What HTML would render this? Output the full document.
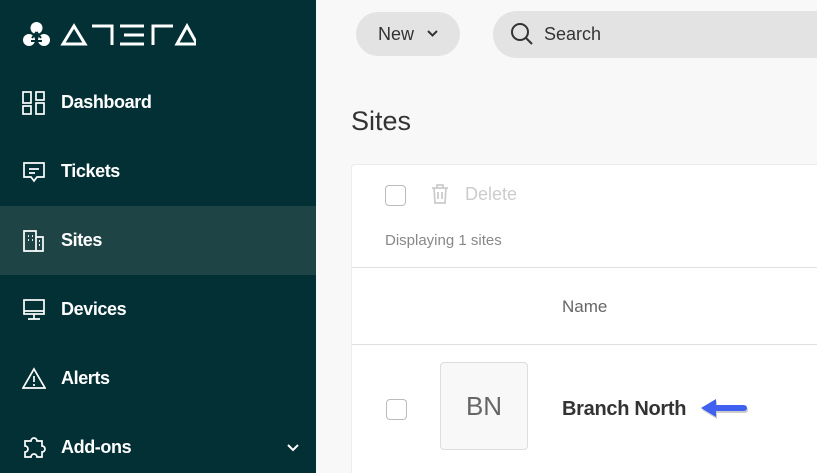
<!DOCTYPE html>
<html style="width:817px;height:473px;overflow:hidden"><head><style>
*{margin:0;padding:0;box-sizing:border-box}
body{width:817px;height:473px;overflow:hidden;font-family:"Liberation Sans",Arial,sans-serif;background:#f8f8f8;position:relative}
.sb{position:absolute;left:0;top:0;width:316px;height:473px;background:#033035;color:#fff}
.item{position:absolute;left:0;width:316px;height:69px;display:flex;align-items:center}
.item svg{position:absolute;left:22px}
.item span{position:absolute;left:61px;font-size:18px;font-weight:bold;letter-spacing:-0.4px}
.act{background:#1f4446}
.main{position:absolute;left:316px;top:0;width:501px;height:473px;overflow:hidden}
.btn{position:absolute;left:40px;top:12px;width:104px;height:44px;border-radius:22px;background:#e3e3e3;font-size:18px;color:#333}
.search{position:absolute;left:177px;top:11px;width:400px;height:47px;border-radius:24px 0 0 24px;background:#e3e3e3}
.card{position:absolute;left:35px;top:164px;width:500px;height:320px;background:#fff;border:1px solid #ececec;border-radius:4px}
.cb{position:absolute;width:21px;height:21px;border:1.5px solid #bbb;border-radius:4px;background:#fff}
</style></head><body>
<div class="sb">
 <svg style="position:absolute;left:22px;top:21px" width="29" height="26" viewBox="0 0 29 26"><circle cx="14.5" cy="7" r="6" fill="#fff"/><circle cx="7" cy="19" r="6" fill="#fff"/><circle cx="22" cy="19" r="6" fill="#fff"/><path d="M14.5 11 L10 17 M14.5 11 L19 17 M9 20 H20" stroke="#033035" stroke-width="2"/></svg>
 <svg style="position:absolute;left:60px;top:23px" width="136" height="24" viewBox="0 0 136 24" fill="none" stroke="#fff" stroke-width="3"><path d="M3 21 L14 3 L25 21 Z" /><path d="M32 3 H52 V22"/><path d="M60 3 H84 M64 12 H84 M60 21 H84"/><path d="M93 22 V3 H113"/><path d="M117 21 L127 3 L137 21 Z"/></svg>
 <div class="item" style="top:68px"><svg width="24" height="24" viewBox="0 0 24 24" fill="none" stroke="#fff" stroke-width="1.7"><rect x="1" y="1" width="8" height="11"/><rect x="1" y="15" width="8" height="8"/><rect x="14" y="1" width="8" height="8"/><rect x="14" y="12" width="8" height="11"/></svg><span>Dashboard</span></div>
 <div class="item" style="top:137px"><svg width="24" height="24" viewBox="0 0 24 24" fill="none" stroke="#fff" stroke-width="1.7"><path d="M2 3 H22 V17 H15 L12 21 L9 17 H2 Z M7 9 H17 M7 13 H13"/></svg><span>Tickets</span></div>
 <div class="item act" style="top:206px"><svg width="24" height="24" viewBox="0 0 24 24" fill="none" stroke="#fff" stroke-width="1.7"><path d="M2 22 V2 H14 V22 Z M14 8 H21 V22 H2 M6 7h1M10 7h1M6 11h1M10 11h1M17 12h1M17 16h1"/></svg><span>Sites</span></div>
 <div class="item" style="top:275px"><svg width="24" height="24" viewBox="0 0 24 24" fill="none" stroke="#fff" stroke-width="1.7"><rect x="2" y="2" width="20" height="14"/><path d="M2 13 H22 M12 16 V21 M6 21 H18"/></svg><span>Devices</span></div>
 <div class="item" style="top:344px"><svg width="24" height="24" viewBox="0 0 24 24" fill="none" stroke="#fff" stroke-width="1.7"><path d="M12 2 L23 21 H1 Z M12 9 V15 M12 17 V19"/></svg><span>Alerts</span></div>
 <div class="item" style="top:413px"><svg width="24" height="24" viewBox="0 0 24 24" fill="none" stroke="#fff" stroke-width="1.7"><path d="M9 5 a3 3 0 0 1 6 0 H20 V10 a3 3 0 0 1 0 6 V21 H15 a3 3 0 0 0 -6 0 H3 V16 a3 3 0 0 0 0 -6 V5 Z"/></svg><span>Add-ons</span><svg style="left:286px" width="14" height="10" viewBox="0 0 14 10" fill="none" stroke="#fff" stroke-width="2"><path d="M2 2 L7 7 L12 2"/></svg></div>
</div>
<div class="main">
 <div class="btn"><span style="position:absolute;left:22px;top:12px">New</span><svg style="position:absolute;left:71px;top:18px" width="11" height="8" viewBox="0 0 11 8" fill="none" stroke="#333" stroke-width="2"><path d="M1 1 L5.5 5.5 L10 1"/></svg></div>
 <div class="search"><svg style="position:absolute;left:17px;top:11px" width="24" height="24" viewBox="0 0 24 24" fill="none" stroke="#333" stroke-width="2"><circle cx="10" cy="10" r="8"/><path d="M16 16 L22 22"/></svg><span style="position:absolute;left:51px;top:13px;font-size:18px;color:#333">Search</span></div>
 <div style="position:absolute;left:35px;top:106px;font-size:27px;color:#333">Sites</div>
 <div class="card">
  <div class="cb" style="left:33px;top:20px"></div>
  <svg style="position:absolute;left:78px;top:18px" width="20" height="22" viewBox="0 0 20 22" fill="none" stroke="#ccc" stroke-width="1.8"><path d="M2 5 H18 M7 5 V2 H13 V5 M4 5 L5 20 H15 L16 5 M8 9 V16 M12 9 V16"/></svg>
  <span style="position:absolute;left:113px;top:19px;font-size:18px;color:#ccc">Delete</span>
  <span style="position:absolute;left:33px;top:67px;font-size:15px;color:#888">Displaying 1 sites</span>
  <div style="position:absolute;left:0;right:0;top:102px;border-top:1px solid #e0e0e0"></div>
  <span style="position:absolute;left:210px;top:132px;font-size:17px;color:#666">Name</span>
  <div style="position:absolute;left:0;right:0;top:179px;border-top:1px solid #e0e0e0"></div>
  <div class="cb" style="left:34px;top:234px"></div>
  <div style="position:absolute;left:88px;top:197px;width:88px;height:88px;border:1px solid #ddd;border-radius:4px;background:#f8f8f8;text-align:center;line-height:86px;font-size:26px;color:#666">BN</div>
  <span style="position:absolute;left:210px;top:233px;font-size:20px;color:#333;font-weight:bold;letter-spacing:-0.3px">Branch North</span>
  <svg style="position:absolute;left:347px;top:231px" width="50" height="28" viewBox="0 0 50 28"><path d="M2 12 L17 3 L17 9 L44 9 Q48 9 48 12 Q48 15 44 15 L17 15 L17 21 Z" fill="#555" opacity=".3" transform="translate(1,2)"/><path d="M2 12 L17 3 L17 9 L44 9 Q48 9 48 12 Q48 15 44 15 L17 15 L17 21 Z" fill="#4060f0"/></svg>
 </div>
</div>
</body></html>
